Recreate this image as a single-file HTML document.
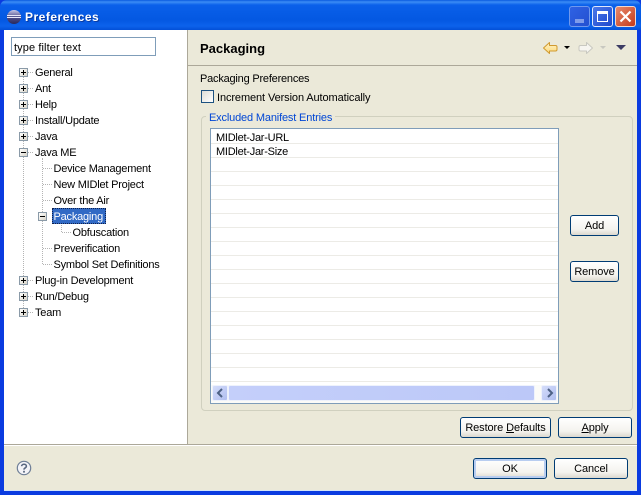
<!DOCTYPE html>
<html><head><meta charset="utf-8"><title>Preferences</title>
<style>
html,body{margin:0;padding:0}
body{width:641px;height:495px;overflow:hidden;position:relative;background:#0a3be0;font:11px "Liberation Sans",sans-serif;color:#000}
div,span.a{position:absolute;box-sizing:border-box}
.t{white-space:nowrap;line-height:14px;height:14px;letter-spacing:-.21px}
.btn{border:1px solid #003c74;border-radius:3px;background:linear-gradient(#fff,#f4f3ee 70%,#dcd8ce);text-align:center;line-height:20px;white-space:nowrap;letter-spacing:-.1px}
.box{width:9px;height:9px;border:1px solid #8a9aa8;background:linear-gradient(135deg,#fff,#d8d4c8)}
.box:before{content:"";position:absolute;left:1px;top:3px;width:5px;height:1px;background:#000}
.box.p:after{content:"";position:absolute;left:3px;top:1px;width:1px;height:5px;background:#000}
.dh{height:1px;border-top:1px dotted #b4b4b4}
.dv{width:1px;border-left:1px dotted #b4b4b4}
.row{left:211px;width:347px;height:1px;background:#ecebe6}
</style></head><body>
<div style="left:0;top:0;width:641px;height:30px;background:linear-gradient(#0a5ae0 0,#3b8cf5 2px,#0a60ea 5px,#0458e2 20px,#0c62ec 26px,#0350d8 30px);border-radius:7px 7px 0 0"></div>
<svg class="a" style="position:absolute;left:7px;top:10px" width="14" height="14"><defs><linearGradient id="e" x1="0" y1="0" x2="0" y2="1"><stop offset="0" stop-color="#c8c8e8"/><stop offset=".5" stop-color="#50508c"/><stop offset="1" stop-color="#28285c"/></linearGradient></defs><circle cx="7" cy="7" r="7" fill="url(#e)"/><path d="M0 5.5h14M0 7.5h14" stroke="#e8e8f8" stroke-width="1"/></svg>
<div class="t" style="left:25px;top:10px;color:#fff;font-weight:bold;font-size:12px;letter-spacing:.5px;text-shadow:1px 1px 0 #0a3aa0">Preferences</div>
<div style="left:569px;top:6px;width:21px;height:21px;border:1px solid #6f98ee;border-radius:3px;background:linear-gradient(135deg,#2f62e4,#2450d0)"><div style="left:5px;top:12px;width:9px;height:4px;background:#7f9cea"></div></div>
<div style="left:592px;top:6px;width:21px;height:21px;border:1px solid #dfe8fc;border-radius:3px;background:linear-gradient(135deg,#4a78ea,#1f48cc)"><div style="left:4px;top:4px;width:11px;height:11px;border:1px solid #fff;border-top-width:3px"></div></div>
<div style="left:615px;top:6px;width:21px;height:21px;border:1px solid #f0d8d0;border-radius:3px;background:linear-gradient(135deg,#e88a6c,#c43a1c)"><svg style="position:absolute;left:3px;top:3px" width="13" height="13"><path d="M1.5 1.5l10 10M11.5 1.5l-10 10" stroke="#fff" stroke-width="2.2"/></svg></div>

<div style="left:4px;top:30px;width:633px;height:461px;background:#ebe9d9"></div>
<div style="left:4px;top:30px;width:183px;height:414px;background:#fff"></div>
<div style="left:187px;top:30px;width:1px;height:414px;background:#aca899"></div>
<div style="left:188px;top:65px;width:449px;height:1px;background:#aca899"></div>
<div style="left:4px;top:444px;width:633px;height:1px;background:#aca899"></div>
<div style="left:4px;top:445px;width:633px;height:1px;background:#fff"></div>
<div style="left:4px;top:490px;width:633px;height:1px;background:#d4e4f8"></div>

<!-- filter -->
<div style="left:11px;top:37px;width:145px;height:19px;border:1px solid #7f9db9;background:#fff"></div>
<div class="t" style="left:14px;top:41px;letter-spacing:.1px">type filter text</div>

<!-- tree lines -->
<div class="dv" style="left:23px;top:76px;height:236px"></div>
<div class="dv" style="left:42px;top:158px;height:106px"></div>
<div class="dv" style="left:61px;top:220px;height:12px"></div>
<div class="dh" style="left:28px;top:72px;width:5px"></div>
<div class="dh" style="left:28px;top:88px;width:5px"></div>
<div class="dh" style="left:28px;top:104px;width:5px"></div>
<div class="dh" style="left:28px;top:120px;width:5px"></div>
<div class="dh" style="left:28px;top:136px;width:5px"></div>
<div class="dh" style="left:28px;top:152px;width:5px"></div>
<div class="dh" style="left:28px;top:280px;width:5px"></div>
<div class="dh" style="left:28px;top:296px;width:5px"></div>
<div class="dh" style="left:28px;top:312px;width:5px"></div>
<div class="dh" style="left:43px;top:168px;width:9px"></div>
<div class="dh" style="left:43px;top:184px;width:9px"></div>
<div class="dh" style="left:43px;top:200px;width:9px"></div>
<div class="dh" style="left:43px;top:248px;width:9px"></div>
<div class="dh" style="left:43px;top:264px;width:9px"></div>
<div class="dh" style="left:62px;top:232px;width:9px"></div>

<div class="box p" style="left:19px;top:68px"></div>
<div class="box p" style="left:19px;top:84px"></div>
<div class="box p" style="left:19px;top:100px"></div>
<div class="box p" style="left:19px;top:116px"></div>
<div class="box p" style="left:19px;top:132px"></div>
<div class="box" style="left:19px;top:148px"></div>
<div class="box" style="left:38px;top:212px"></div>
<div class="box p" style="left:19px;top:276px"></div>
<div class="box p" style="left:19px;top:292px"></div>
<div class="box p" style="left:19px;top:308px"></div>

<div class="t" style="left:35px;top:66px">General</div>
<div class="t" style="left:35px;top:82px">Ant</div>
<div class="t" style="left:35px;top:98px">Help</div>
<div class="t" style="left:35px;top:114px">Install/Update</div>
<div class="t" style="left:35px;top:130px">Java</div>
<div class="t" style="left:35px;top:146px">Java ME</div>
<div class="t" style="left:53.5px;top:162px">Device Management</div>
<div class="t" style="left:53.5px;top:178px">New MIDlet Project</div>
<div class="t" style="left:53.5px;top:194px">Over the Air</div>
<div style="left:52px;top:208px;width:54px;height:16px;background:#316ac5;outline:1px dotted #10204a;outline-offset:-1px"></div>
<div class="t" style="left:53.5px;top:210px;color:#fff">Packaging</div>
<div class="t" style="left:72.5px;top:226px">Obfuscation</div>
<div class="t" style="left:53.5px;top:242px">Preverification</div>
<div class="t" style="left:53.5px;top:258px">Symbol Set Definitions</div>
<div class="t" style="left:35px;top:274px">Plug-in Development</div>
<div class="t" style="left:35px;top:290px">Run/Debug</div>
<div class="t" style="left:35px;top:306px">Team</div>

<!-- header -->
<div class="t" style="left:200px;top:42px;font-weight:bold;font-size:13px;letter-spacing:0">Packaging</div>
<svg style="position:absolute;left:540px;top:38px" width="90" height="18">
<defs><linearGradient id="y" x1="0" y1="0" x2="0" y2="1"><stop offset="0" stop-color="#fff4c8"/><stop offset="1" stop-color="#fcd878"/></linearGradient></defs>
<path d="M3.5 10L9.5 4.5V7.5H15.5Q17 7.5 17 9V11.5Q17 13 15.5 13H9.5V15.5Z" fill="url(#y)" stroke="#d09a30" stroke-linejoin="round"/>
<path d="M24 8h6l-3 3z" fill="#000"/>
<path d="M52.5 10L46.5 4.5V7.5H40.5Q39 7.5 39 9V11.5Q39 13 40.5 13H46.5V15.5Z" fill="#f6f5f0" stroke="#c8c8c0" stroke-linejoin="round"/>
<path d="M60 8h6l-3 3z" fill="#c8c8c0"/>
<path d="M76 7h10l-5 5z" fill="#3c3c64"/>
</svg>

<div class="t" style="left:200px;top:72px">Packaging Preferences</div>
<div style="left:201px;top:90px;width:13px;height:13px;border:1px solid #1c5180;background:linear-gradient(135deg,#dcdcd6,#fff)"></div>
<div class="t" style="left:217px;top:91px;letter-spacing:-.1px">Increment Version Automatically</div>

<!-- group -->
<div style="left:201px;top:116px;width:432px;height:295px;border:1px solid #d0d0bf;border-radius:4px"></div>
<div class="t" style="left:206px;top:111px;background:#ebe9d9;padding:0 3px;color:#0046d5;letter-spacing:-.16px">Excluded Manifest Entries</div>

<!-- table -->
<div style="left:210px;top:128px;width:349px;height:276px;border:1px solid #7f9db9;background:#fff"></div>
<div class="row" style="top:143px"></div><div class="row" style="top:157px"></div><div class="row" style="top:171px"></div><div class="row" style="top:185px"></div><div class="row" style="top:199px"></div><div class="row" style="top:213px"></div><div class="row" style="top:227px"></div><div class="row" style="top:241px"></div><div class="row" style="top:255px"></div><div class="row" style="top:269px"></div><div class="row" style="top:283px"></div><div class="row" style="top:297px"></div><div class="row" style="top:311px"></div><div class="row" style="top:325px"></div><div class="row" style="top:339px"></div><div class="row" style="top:353px"></div><div class="row" style="top:367px"></div><div class="row" style="top:381px"></div>
<div class="t" style="left:216px;top:131px;letter-spacing:-.25px">MIDlet-Jar-URL</div>
<div class="t" style="left:216px;top:145px;letter-spacing:-.25px">MIDlet-Jar-Size</div>

<!-- scrollbar -->
<div style="left:211px;top:385px;width:347px;height:18px;background:#fbfbf8"></div>
<div style="left:212px;top:385px;width:16px;height:16px;border:1px solid #eef2fc;border-radius:2px;background:linear-gradient(135deg,#d4dcfa,#b0bef0)"><svg style="position:absolute;left:2px;top:2px" width="10" height="10"><path d="M7 1L3 5l4 4" fill="none" stroke="#4d6185" stroke-width="2"/></svg></div>
<div style="left:228px;top:385px;width:307px;height:16px;border:1px solid #eef2fc;border-radius:2px;background:linear-gradient(90deg,#c4cffa,#bcc8f8)"></div>
<div style="left:541px;top:385px;width:16px;height:16px;border:1px solid #eef2fc;border-radius:2px;background:linear-gradient(135deg,#d4dcfa,#b0bef0)"><svg style="position:absolute;left:3px;top:2px" width="10" height="10"><path d="M3 1l4 4-4 4" fill="none" stroke="#4d6185" stroke-width="2"/></svg></div>

<!-- buttons -->
<div class="btn" style="left:570px;top:215px;width:49px;height:21px">Add</div>
<div class="btn" style="left:570px;top:261px;width:49px;height:21px">Remove</div>
<div class="btn" style="left:460px;top:417px;width:91px;height:21px">Restore <u>D</u>efaults</div>
<div class="btn" style="left:558px;top:417px;width:74px;height:21px"><u>A</u>pply</div>
<div class="btn" style="left:473px;top:458px;width:74px;height:21px;box-shadow:inset 0 0 0 2px #b8cdf0">OK</div>
<div class="btn" style="left:554px;top:458px;width:74px;height:21px">Cancel</div>

<!-- help -->
<svg style="position:absolute;left:16px;top:460px" width="16" height="16"><circle cx="8" cy="8" r="6.7" fill="#f4f4f8" stroke="#6e7e96" stroke-width="1.2"/><path d="M5.6 6.2C5.8 3.6 10.4 3.6 10.4 6.2C10.4 7.8 8 7.8 8 9.6" fill="none" stroke="#5a6880" stroke-width="1.6"/><rect x="7.1" y="10.8" width="1.8" height="1.8" fill="#5a6880"/></svg>
</body></html>
